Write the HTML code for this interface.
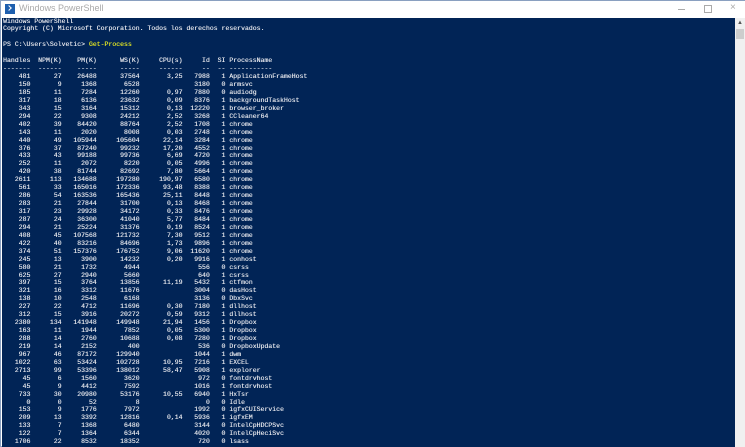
<!DOCTYPE html>
<html><head><meta charset="utf-8"><style>
html,body{margin:0;padding:0;width:745px;height:447px;overflow:hidden;background:#fff;}
.win{position:absolute;left:0;top:0;width:745px;height:447px;border:1px solid #8aa0c0;box-sizing:border-box;}
.title{position:absolute;left:0;top:0;width:745px;height:17px;background:#fff;}
.icon{position:absolute;left:4px;top:3px;width:10px;height:10px;background:#1e5fae;}
.icon:after{content:"";position:absolute;left:2px;top:2px;width:3px;height:3px;border-right:1px solid #fff;border-bottom:1px solid #fff;transform:rotate(-45deg);}
.ttext{position:absolute;left:18px;top:2px;font:9px "Liberation Sans",sans-serif;color:#aaa;}
.ctl{position:absolute;top:1px;font:10px "Liberation Sans",sans-serif;color:#aaa;}
.con{position:absolute;left:1px;top:17px;width:733px;height:429px;background:#012456;overflow:hidden;}
pre{margin:0;position:absolute;left:1px;top:-0.5px;font-family:"Liberation Mono",monospace;font-size:6.5px;line-height:7.93px;color:#eeeef2;text-shadow:0.3px 0 0 rgba(238,238,242,0.6);}
.y{color:#eef020;text-shadow:0.3px 0 0 rgba(238,240,32,0.6);}
.sb{position:absolute;left:734px;top:17px;width:10px;height:429px;background:#f0f0f0;}
.thumb{position:absolute;left:1px;top:11px;width:8px;height:10px;background:#cdcdcd;}
.arr{position:absolute;left:2px;top:2px;font:6px "Liberation Sans",sans-serif;color:#555;}
</style></head><body><div class="win">
<div class="title"><div class="icon"></div><div class="ttext">Windows PowerShell</div>
<div class="ctl" style="left:677px;top:8px;width:7px;height:1px;background:#aaa;"></div>
<div class="ctl" style="left:703px;top:4px;width:6px;height:6px;border:1px solid #aaa;"></div>
<div class="ctl" style="left:729px;">&#215;</div></div>
<div class="con"><pre>Windows PowerShell
Copyright (C) Microsoft Corporation. Todos los derechos reservados.

PS C:\Users\Solvetic&gt; <span class="y">Get-Process</span>

Handles  NPM(K)    PM(K)      WS(K)     CPU(s)     Id  SI ProcessName
-------  ------    -----      -----     ------     --  -- -----------
    481      27    26488      37564       3,25   7988   1 ApplicationFrameHost
    150       9     1368       6528              3180   0 armsvc
    185      11     7284      12260       0,97   7880   0 audiodg
    317      18     6136      23632       0,09   8376   1 backgroundTaskHost
    343      15     3164      15312       0,13  12220   1 browser_broker
    294      22     9308      24212       2,52   3268   1 CCleaner64
    402      39    84420      88764       2,52   1708   1 chrome
    143      11     2020       8008       0,03   2748   1 chrome
    440      49   105944     105604      22,14   3284   1 chrome
    376      37    87240      99232      17,20   4552   1 chrome
    433      43    99188      99736       6,69   4720   1 chrome
    252      11     2072       8220       0,05   4996   1 chrome
    420      38    81744      82692       7,80   5664   1 chrome
   2611     113   134688     197280     190,97   6580   1 chrome
    561      33   165016     172336      93,48   8388   1 chrome
    286      54   163536     165436      25,11   8448   1 chrome
    283      21    27844      31700       0,13   8468   1 chrome
    317      23    29928      34172       0,33   8476   1 chrome
    287      24    36300      41040       5,77   8484   1 chrome
    294      21    25224      31376       0,19   8524   1 chrome
    408      45   107568     121732       7,30   9512   1 chrome
    422      40    83216      84696       1,73   9896   1 chrome
    374      51   157376     176752       9,06  11620   1 chrome
    245      13     3900      14232       0,20   9916   1 conhost
    580      21     1732       4944               556   0 csrss
    625      27     2940       5660               640   1 csrss
    397      15     3764      13856      11,19   5432   1 ctfmon
    321      16     3312      11676              3004   0 dasHost
    138      10     2548       6168              3136   0 DbxSvc
    227      22     4712      11696       0,30   7180   1 dllhost
    312      15     3916      20272       0,59   9312   1 dllhost
   2380     134   141948     149948      21,94   1456   1 Dropbox
    163      11     1944       7852       0,05   5300   1 Dropbox
    288      14     2760      10688       0,08   7280   1 Dropbox
    219      14     2152        400               536   0 DropboxUpdate
    967      46    87172     129940              1044   1 dwm
   1022      63    53424     102728      10,95   7216   1 EXCEL
   2713      99    53396     138012      58,47   5908   1 explorer
     45       6     1560       3620               972   0 fontdrvhost
     45       9     4412       7592              1016   1 fontdrvhost
    733      30    20980      53176      10,55   6940   1 HxTsr
      0       0       52          8                 0   0 Idle
    153       9     1776       7972              1992   0 igfxCUIService
    209      13     3392      12816       0,14   5936   1 igfxEM
    133       7     1368       6480              3144   0 IntelCpHDCPSvc
    122       7     1364       6344              4020   0 IntelCpHeciSvc
   1706      22     8532      18352               720   0 lsass</pre></div>
<div class="sb"><div class="arr">&#9650;</div><div class="thumb"></div></div>
</div></body></html>
